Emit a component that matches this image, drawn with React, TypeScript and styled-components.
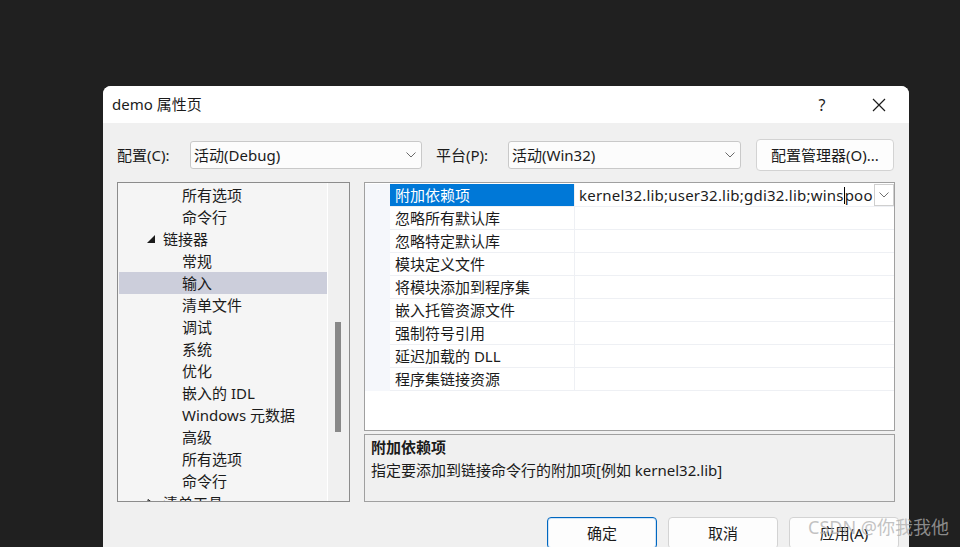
import React from "react";
import styled, { createGlobalStyle } from "styled-components";

const Global = createGlobalStyle`
  html, body { margin: 0; padding: 0; background: #202020; overflow: hidden; }
  body {
    font-family: "Noto Sans", "Noto Sans CJK SC", sans-serif;
    font-size: 15px;
    color: #1b1b1b;
  }
  * { box-sizing: border-box; }
`;

const Screen = styled.div`
  position: relative;
  width: 960px;
  height: 547px;
  overflow: hidden;
  padding: 86px 0 0 103px;
`;

const Dialog = styled.div`
  width: 806px;
  height: 500px;
  background: #f0f0f0;
  border-radius: 8px 8px 0 0;
  overflow: hidden;
  display: flex;
  flex-direction: column;
`;

const TitleBar = styled.div`
  height: 37px;
  background: #ffffff;
  display: flex;
  align-items: center;
  padding: 0 7px 0 9px;
  flex-shrink: 0;
`;

const TitleText = styled.div`
  font-size: 15px;
  line-height: 20px;
  margin-top: -1px;
`;

const TitleButtons = styled.div`
  margin-left: auto;
  display: flex;
  gap: 11px;
  height: 100%;
`;

const TitleButton = styled.div`
  width: 46px;
  height: 100%;
  display: flex;
  align-items: center;
  justify-content: center;
  font-size: 16px;
  color: #1b1b1b;
`;

const Content = styled.div`
  padding: 0 14px;
  display: flex;
  flex-direction: column;
`;

const ConfigRow = styled.div`
  margin-top: 16px;
  height: 32px;
  display: flex;
  align-items: center;
`;

const Label = styled.div<{ $w: number }>`
  width: ${(p) => p.$w}px;
  line-height: 20px;
  flex-shrink: 0;
`;

const Combo = styled.div<{ $w: number; $gap?: number }>`
  width: ${(p) => p.$w}px;
  margin-right: ${(p) => p.$gap ?? 0}px;
  height: 28px;
  border: 1px solid #c9c9c9;
  border-radius: 3px;
  background: #fcfcfc;
  display: flex;
  align-items: center;
  padding: 0 5px 0 3px;
  flex-shrink: 0;
`;

const ComboText = styled.div`
  flex: 1;
  line-height: 20px;
  white-space: nowrap;
`;

const PushButton = styled.div<{ $w: number; $primary?: boolean }>`
  width: ${(p) => p.$w}px;
  height: 32px;
  border: 1px solid ${(p) => (p.$primary ? "#0067c0" : "#d3d3d3")};
  border-radius: 4px;
  background: #fdfdfd;
  display: flex;
  align-items: center;
  justify-content: center;
  line-height: 20px;
  flex-shrink: 0;
  ${(p) => (p.$primary ? "box-shadow: inset 0 0 0 1px #cfe3f6;" : "")}
`;

const Main = styled.div`
  margin-top: 11px;
  display: flex;
  gap: 14px;
`;

const Tree = styled.div`
  width: 233px;
  height: 320px;
  border: 1px solid #8c8c8c;
  display: flex;
  overflow: hidden;
`;

const TreeList = styled.div`
  flex: 1;
  background: #f5f5f5;
  padding-top: 1px;
  overflow: hidden;
`;

const TreeRow = styled.div<{ $indent: number; $selected?: boolean }>`
  height: 22px;
  margin-left: 1px;
  padding-left: ${(p) => p.$indent}px;
  display: flex;
  align-items: center;
  gap: 8px;
  line-height: 20px;
  white-space: nowrap;
  background: ${(p) => (p.$selected ? "#cccedb" : "transparent")};
`;

const TreeDivider = styled.div`
  width: 1px;
  background: #ffffff;
`;

const ScrollTrack = styled.div`
  width: 21px;
  background: #f0f0f0;
  padding: 139px 0 0 7px;
`;

const ScrollThumb = styled.div`
  width: 6px;
  height: 110px;
  background: #888888;
`;

const RightCol = styled.div`
  width: 531px;
  display: flex;
  flex-direction: column;
  gap: 3px;
`;

const Grid = styled.div`
  height: 249px;
  border: 1px solid #a0a0a0;
  background: #ffffff;
  padding-top: 1px;
  overflow: hidden;
`;

const GridRow = styled.div`
  display: grid;
  grid-template-columns: 25px 185px 1fr;
  height: 23px;
`;

const Margin = styled.div`
  background: #f5f7fb;
`;

const NameCell = styled.div<{ $selected?: boolean }>`
  background: ${(p) => (p.$selected ? "#0078d7" : "#ffffff")};
  color: ${(p) => (p.$selected ? "#ffffff" : "#1b1b1b")};
  border-bottom: 1px solid #eef0f4;
  border-right: 1px solid #eef0f4;
  padding-left: 5px;
  display: flex;
  align-items: center;
  line-height: 20px;
  white-space: nowrap;
`;

const ValueCell = styled.div`
  border-bottom: 1px solid #eef0f4;
  display: flex;
  align-items: center;
  padding-left: 4px;
  overflow: hidden;
  white-space: nowrap;
  line-height: 20px;
`;

const ValueText = styled.div`
  flex: 1;
  overflow: hidden;
  white-space: nowrap;
  letter-spacing: 0.22px;
`;

const Caret = styled.span`
  display: inline-block;
  width: 1px;
  height: 17px;
  background: #000;
  vertical-align: -3px;
`;

const DropButton = styled.div`
  width: 20px;
  height: 22px;
  border: 1px solid #cfcfcf;
  background: #ffffff;
  display: flex;
  align-items: center;
  justify-content: center;
  flex-shrink: 0;
  margin-top: -1px;
`;

const Desc = styled.div`
  height: 68px;
  border: 1px solid #a0a0a0;
  background: #f0f0f0;
  padding: 1px 6px 0 6px;
  line-height: 23px;
`;

const DescTitle = styled.div`
  font-weight: 700;
`;

const ButtonRow = styled.div`
  margin-top: 15px;
  margin-right: -4px;
  display: flex;
  justify-content: flex-end;
  gap: 11px;
`;

const Watermark = styled.div`
  position: absolute;
  left: 808px;
  top: 515px;
  font-size: 18px;
  line-height: 24px;
  color: rgba(175, 175, 175, 0.75);
  white-space: nowrap;
  pointer-events: none;
`;

const Chevron = ({ color = "#6a6a6a" }: { color?: string }) => (
  <svg width="10" height="6" viewBox="0 0 10 6">
    <polyline points="0.5,0.5 5,5 9.5,0.5" fill="none" stroke={color} strokeWidth="1" />
  </svg>
);

const Expanded = () => (
  <svg width="8" height="8" viewBox="0 0 8 8">
    <polygon points="8,0 8,8 0,8" fill="#1b1b1b" />
  </svg>
);

const Collapsed = () => (
  <svg width="8" height="9" viewBox="0 0 8 9">
    <polygon points="1,0.5 6.5,4.5 1,8.5" fill="none" stroke="#1b1b1b" strokeWidth="1" />
  </svg>
);

const CloseIcon = () => (
  <svg width="14" height="14" viewBox="0 0 14 14">
    <path d="M1 1 L13 13 M13 1 L1 13" stroke="#1b1b1b" strokeWidth="1.2" fill="none" />
  </svg>
);

type TreeItem = { label: string; indent: number; kind?: "expanded" | "collapsed"; selected?: boolean };

const treeItems: TreeItem[] = [
  { label: "所有选项", indent: 63 },
  { label: "命令行", indent: 63 },
  { label: "链接器", indent: 28, kind: "expanded" },
  { label: "常规", indent: 63 },
  { label: "输入", indent: 63, selected: true },
  { label: "清单文件", indent: 63 },
  { label: "调试", indent: 63 },
  { label: "系统", indent: 63 },
  { label: "优化", indent: 63 },
  { label: "嵌入的 IDL", indent: 63 },
  { label: "Windows 元数据", indent: 63 },
  { label: "高级", indent: 63 },
  { label: "所有选项", indent: 63 },
  { label: "命令行", indent: 63 },
  { label: "清单工具", indent: 28, kind: "collapsed" },
];

const props = [
  "附加依赖项",
  "忽略所有默认库",
  "忽略特定默认库",
  "模块定义文件",
  "将模块添加到程序集",
  "嵌入托管资源文件",
  "强制符号引用",
  "延迟加载的 DLL",
  "程序集链接资源",
];

export default function App() {
  return (
    <>
      <Global />
      <Screen>
        <Dialog>
          <TitleBar>
            <TitleText>demo 属性页</TitleText>
            <TitleButtons>
              <TitleButton>?</TitleButton>
              <TitleButton>
                <CloseIcon />
              </TitleButton>
            </TitleButtons>
          </TitleBar>
          <Content>
            <ConfigRow>
              <Label $w={73}>配置(C):</Label>
              <Combo $w={232} $gap={14}>
                <ComboText>活动(Debug)</ComboText>
                <Chevron />
              </Combo>
              <Label $w={72}>平台(P):</Label>
              <Combo $w={233} $gap={15}>
                <ComboText>活动(Win32)</ComboText>
                <Chevron />
              </Combo>
              <PushButton $w={138}>配置管理器(O)...</PushButton>
            </ConfigRow>
            <Main>
              <Tree>
                <TreeList>
                  {treeItems.map((it, i) => (
                    <TreeRow key={i} $indent={it.indent} $selected={it.selected}>
                      {it.kind === "expanded" && <Expanded />}
                      {it.kind === "collapsed" && <Collapsed />}
                      <span>{it.label}</span>
                    </TreeRow>
                  ))}
                </TreeList>
                <TreeDivider />
                <ScrollTrack>
                  <ScrollThumb />
                </ScrollTrack>
              </Tree>
              <RightCol>
                <Grid>
                  {props.map((p, i) => (
                    <GridRow key={i}>
                      <Margin />
                      <NameCell $selected={i === 0}>{p}</NameCell>
                      <ValueCell>
                        {i === 0 && (
                          <>
                            <ValueText>
                              kernel32.lib;user32.lib;gdi32.lib;wins<Caret />poo
                            </ValueText>
                            <DropButton>
                              <Chevron color="#707070" />
                            </DropButton>
                          </>
                        )}
                      </ValueCell>
                    </GridRow>
                  ))}
                </Grid>
                <Desc>
                  <DescTitle>附加依赖项</DescTitle>
                  <div>指定要添加到链接命令行的附加项[例如 kernel32.lib]</div>
                </Desc>
              </RightCol>
            </Main>
            <ButtonRow>
              <PushButton $w={110} $primary>确定</PushButton>
              <PushButton $w={110}>取消</PushButton>
              <PushButton $w={110}>应用(A)</PushButton>
            </ButtonRow>
          </Content>
        </Dialog>
        <Watermark>CSDN @你我我他</Watermark>
      </Screen>
    </>
  );
}
